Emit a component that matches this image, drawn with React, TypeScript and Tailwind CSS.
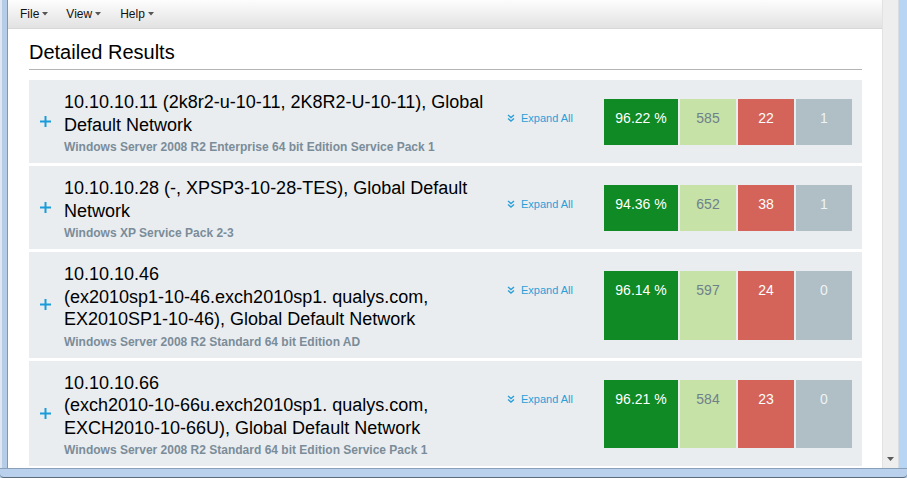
import React from "react";

type Row = {
  lines: string[];
  sub: string;
  pct: string;
  a: string;
  b: string;
  c: string;
};

const rows: Row[] = [
  {
    lines: ["10.10.10.11 (2k8r2-u-10-11, 2K8R2-U-10-11), Global", "Default Network"],
    sub: "Windows Server 2008 R2 Enterprise 64 bit Edition Service Pack 1",
    pct: "96.22 %",
    a: "585",
    b: "22",
    c: "1",
  },
  {
    lines: ["10.10.10.28 (-, XPSP3-10-28-TES), Global Default", "Network"],
    sub: "Windows XP Service Pack 2-3",
    pct: "94.36 %",
    a: "652",
    b: "38",
    c: "1",
  },
  {
    lines: ["10.10.10.46", "(ex2010sp1-10-46.exch2010sp1. qualys.com,", "EX2010SP1-10-46), Global Default Network"],
    sub: "Windows Server 2008 R2 Standard 64 bit Edition AD",
    pct: "96.14 %",
    a: "597",
    b: "24",
    c: "0",
  },
  {
    lines: ["10.10.10.66", "(exch2010-10-66u.exch2010sp1. qualys.com,", "EXCH2010-10-66U), Global Default Network"],
    sub: "Windows Server 2008 R2 Standard 64 bit Edition Service Pack 1",
    pct: "96.21 %",
    a: "584",
    b: "23",
    c: "0",
  },
];

function Plus() {
  return (
    <svg width="11" height="11" viewBox="0 0 11 11">
      <rect x="0" y="4.5" width="11" height="2" fill="#1b9bd7" />
      <rect x="4.5" y="0" width="2" height="11" fill="#1b9bd7" />
    </svg>
  );
}

function Chevrons() {
  return (
    <svg width="8" height="8" viewBox="0 0 8 8" fill="none">
      <path d="M1 1 L4 3.5 L7 1" stroke="#2a9fd8" strokeWidth="1.4" />
      <path d="M1 4.5 L4 7 L7 4.5" stroke="#2a9fd8" strokeWidth="1.4" />
    </svg>
  );
}

function Caret() {
  return (
    <svg width="6" height="4" viewBox="0 0 6 4" className="ml-[3px]">
      <path d="M0 0 L6 0 L3 3.5 Z" fill="#555" />
    </svg>
  );
}

function ResultRow({ r }: { r: Row }) {
  return (
    <div className="flex bg-[#e9edf0] shrink-0">
      <div className="w-[35px] flex items-center pl-[11px] shrink-0">
        <Plus />
      </div>
      <div className="w-[440px] pt-[11px] pb-[8px] shrink-0">
        <div className="text-[18px] leading-[22.5px] text-black">
          {r.lines.map((l, i) => (
            <div key={i} className="whitespace-nowrap">
              {l}
            </div>
          ))}
        </div>
        <div className="mt-[3px] text-[12px] leading-[16px] font-bold text-[#7b8c99]">{r.sub}</div>
      </div>
      <div className="w-[100px] pt-[31px] pl-[3px] shrink-0">
        <div className="flex items-center gap-[6px] text-[11px] leading-[14px] text-[#2a9fd8]">
          <Chevrons />
          <span>Expand All</span>
        </div>
      </div>
      <div className="flex gap-[2px] pt-[19px] pb-[18px] shrink-0">
        <div className="w-[74px] bg-[#0f8a24] text-white text-[14px] leading-[20px] pt-[9px] text-center">{r.pct}</div>
        <div className="w-[56px] bg-[#c6e2a7] text-[#6f808b] text-[14px] leading-[20px] pt-[9px] text-center">{r.a}</div>
        <div className="w-[56px] bg-[#d4645a] text-white text-[14px] leading-[20px] pt-[9px] text-center">{r.b}</div>
        <div className="w-[56px] bg-[#b0bec5] text-[#eef3f5] text-[14px] leading-[20px] pt-[9px] text-center">{r.c}</div>
      </div>
    </div>
  );
}

export default function App() {
  return (
    <div
      className="w-[907px] h-[478px] overflow-hidden bg-[#b9d3ef] flex flex-col"
      style={{ fontFamily: '"Liberation Sans", Arial, sans-serif' }}
    >
      <div className="flex h-[468px] shrink-0">
        <div className="w-[8px] shrink-0 bg-[#b6cde8] border-l-[2px] border-l-[#dfe8f2] border-r border-r-[#8297ae]" />
        <div className="w-[874px] shrink-0 flex flex-col bg-white overflow-hidden">
          <div className="h-[29px] shrink-0 flex items-center pl-[12px] bg-gradient-to-b from-[#fdfdfd] to-[#e2e2e2] border-b border-[#d8d8d8] text-[12px] text-[#111]">
            <div className="flex items-center">
              <span>File</span>
              <Caret />
            </div>
            <div className="flex items-center ml-[18px]">
              <span>View</span>
              <Caret />
            </div>
            <div className="flex items-center ml-[19px]">
              <span>Help</span>
              <Caret />
            </div>
          </div>
          <div className="pl-[21px] pr-[20px] flex flex-col">
            <div className="mt-[11px] text-[20px] leading-[24px] text-black">Detailed Results</div>
            <div className="mt-[5px] border-b border-[#b4b4b4]" />
            <div className="mt-[10px] flex flex-col gap-[3px]">
              {rows.map((r, i) => (
                <ResultRow key={i} r={r} />
              ))}
            </div>
          </div>
        </div>
        <div className="w-[17px] shrink-0 bg-[#eeeeee] border-l border-[#e2e2e2] border-r border-r-[#d8dde4] flex flex-col justify-end items-center pb-[7px]">
          <svg width="7" height="4" viewBox="0 0 7 4">
            <path d="M0 0 L7 0 L3.5 4 Z" fill="#5a5a5a" />
          </svg>
        </div>
        <div className="w-[8px] shrink-0 bg-[#b9d5f4]" />
      </div>
      <div className="h-[10px] shrink-0 border-t border-[#8aa0b9] bg-[#b9d1ec] rounded-b-[4px] border-b border-b-[#5c6a7a]" />
    </div>
  );
}
